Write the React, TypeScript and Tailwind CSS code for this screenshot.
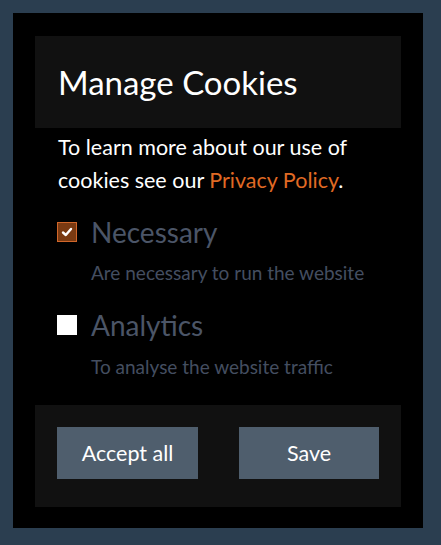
import React, { useState } from 'react';

const App: React.FC = () => {
  const [necessary] = useState(true);
  const [analytics, setAnalytics] = useState(false);

  return (
    <div
      className="w-[441px] h-[545px] bg-[#2b3e50] pt-[13px] pl-[13px]"
      style={{ fontFamily: 'Lato, "Liberation Sans", sans-serif' }}
    >
      <div className="w-[410px] h-[515px] bg-black px-[22px] pt-[23px] pb-[21px] flex flex-col">
        <div className="h-[92px] bg-[#111111] px-[23px] flex items-center">
          <h2 className="text-[33px] text-white leading-none">Manage Cookies</h2>
        </div>

        <div className="px-[22px]">
          <p className="mt-[3px] ml-[1px] text-[21.5px] leading-[33px] text-white">
            To learn more about our use of cookies see our{' '}
            <a className="text-[#e06a24]">Privacy Policy</a>.
          </p>

          <div className="mt-[15px]">
            <label className="flex items-center h-[40px]">
              <span className="w-[20px] h-[20px] bg-[#7a3a12] border border-[#d0662a] flex items-center justify-center">
                {necessary && (
                  <svg width="12" height="12" viewBox="0 0 12 12">
                    <path d="M2 6.5 L4.8 9 L10 3" stroke="white" strokeWidth="2.4" fill="none" strokeLinecap="round" strokeLinejoin="round" />
                  </svg>
                )}
              </span>
              <span className="ml-[14px] text-[28px] text-[#4b5567] leading-none">Necessary</span>
            </label>
            <p className="ml-[34px] mt-[7px] text-[19px] leading-[28px] text-[#444e60]">Are necessary to run the website</p>
          </div>

          <div className="mt-[18px]">
            <label className="flex items-center h-[40px]" onClick={() => setAnalytics(!analytics)}>
              <span className="w-[20px] h-[20px] bg-white" />
              <span className="ml-[14px] text-[28px] text-[#4b5567] leading-none">Analytics</span>
            </label>
            <p className="ml-[34px] mt-[8px] text-[19px] leading-[28px] text-[#444e60]">To analyse the website traffic</p>
          </div>
        </div>

        <div className="mt-auto h-[102px] bg-[#111111] px-[22px] pt-[22px] flex items-start justify-between">
          <button className="w-[141px] h-[52px] bg-[#4f5e6d] text-white text-[21.5px]">Accept all</button>
          <button className="w-[140px] h-[52px] bg-[#4f5e6d] text-white text-[21.5px]">Save</button>
        </div>
      </div>
    </div>
  );
};

export default App;
